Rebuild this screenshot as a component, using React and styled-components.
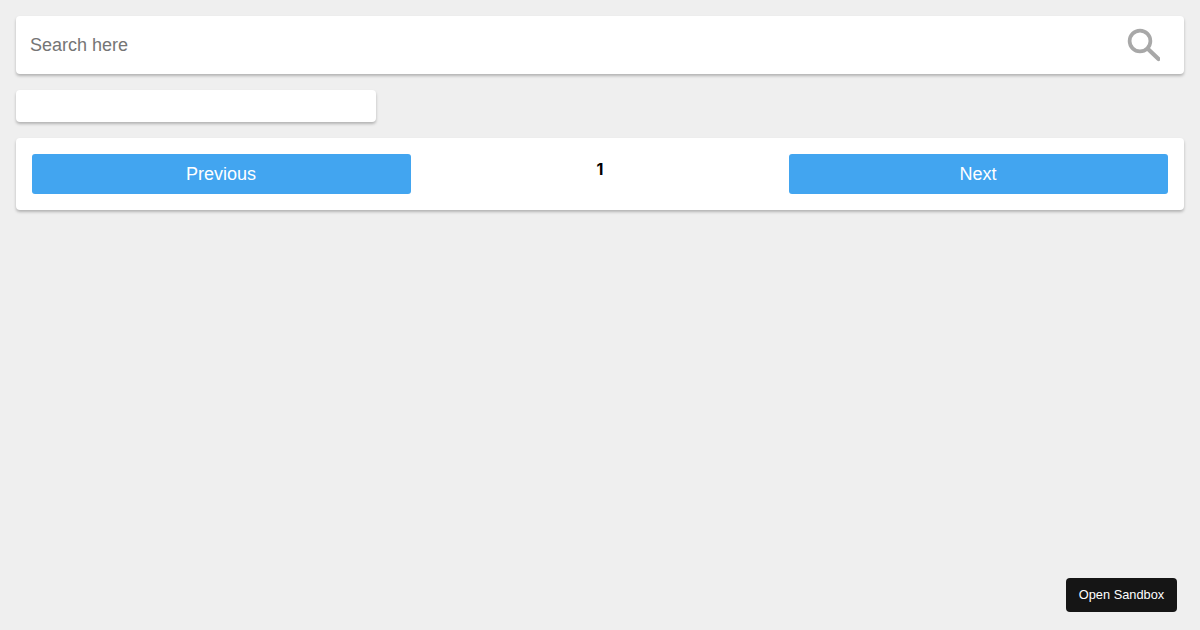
import React from "react";
import styled, { createGlobalStyle } from "styled-components";

const Global = createGlobalStyle`
  html, body { margin: 0; padding: 0; background: #efefef; height: 100%; }
  body {
    font-family: "Liberation Sans", Arial, sans-serif;
    overflow: hidden;
  }
`;

const Page = styled.div`
  display: flex;
  flex-direction: column;
  align-items: flex-start;
  gap: 16px;
  padding: 16px;
  box-sizing: border-box;
  width: 1200px;
  height: 630px;
  position: relative;
`;

const Card = styled.div`
  background: #fff;
  border-radius: 4px;
  box-shadow: 0 2px 3px rgba(0, 0, 0, 0.25);
  box-sizing: border-box;
`;

const SearchBar = styled(Card)`
  width: 100%;
  height: 58px;
  display: flex;
  align-items: center;
  padding: 0 24px 0 14px;
`;

const SearchInput = styled.input`
  flex: 1;
  border: 0;
  outline: 0;
  background: transparent;
  font-family: inherit;
  font-size: 18px;
  color: #222;
  padding: 0;
  &::placeholder { color: #757575; opacity: 1; }
`;

const SearchButton = styled.span`
  display: flex;
  width: 34px;
  height: 34px;
`;

const Suggestions = styled(Card)`
  width: 360px;
  height: 32px;
`;

const Pager = styled(Card)`
  width: 100%;
  height: 72px;
  padding: 16px;
  display: grid;
  grid-template-columns: 379px 1fr 379px;
`;

const PagerButton = styled.button`
  height: 40px;
  border: 0;
  border-radius: 3px;
  background: #42a5f0;
  color: #fff;
  font-family: inherit;
  font-size: 18px;
  padding: 0 1px 0 0;
`;

const PageNumber = styled.div`
  text-align: center;
  font-family: Inter, "Liberation Sans", sans-serif;
  font-size: 16px;
  font-weight: 700;
  color: #000;
  line-height: 18px;
  padding-top: 6px;
`;

const SandboxLink = styled.a`
  position: absolute;
  right: 23px;
  bottom: 18px;
  width: 111px;
  height: 34px;
  display: flex;
  align-items: center;
  justify-content: center;
  background: #151515;
  border-radius: 4px;
  color: #fff;
  font-size: 12.8px;
  text-decoration: none;
  padding-bottom: 1px;
  box-sizing: border-box;
`;

export default function App() {
  return (
    <>
      <Global />
      <Page>
        <SearchBar>
          <SearchInput placeholder="Search here" />
          <SearchButton>
            <svg width="34" height="34" viewBox="0 0 34 34" fill="none" stroke="#a8a8a8" strokeLinecap="round">
              <circle cx="14" cy="13" r="10.4" strokeWidth="3.7" />
              <path d="M22 21 L32.5 31" strokeWidth="4.2" />
            </svg>
          </SearchButton>
        </SearchBar>
        <Suggestions />
        <Pager>
          <PagerButton>Previous</PagerButton>
          <PageNumber>1</PageNumber>
          <PagerButton>Next</PagerButton>
        </Pager>
        <SandboxLink href="#">Open Sandbox</SandboxLink>
      </Page>
    </>
  );
}
